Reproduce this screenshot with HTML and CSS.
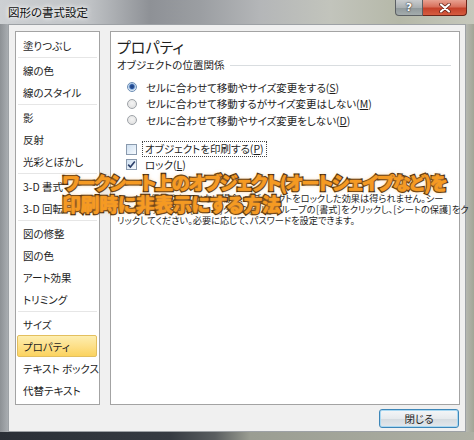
FILE: index.html
```html
<!DOCTYPE html>
<html lang="ja">
<head>
<meta charset="utf-8">
<title>図形の書式設定</title>
<link rel="stylesheet" href="styles.css">
</head>
<body>
<div class="window">
  <div class="titlebar">
    <span class="title">図形の書式設定</span>
    <div class="caption-buttons">
      <span class="btn-help">?</span>
      <span class="btn-close"><svg width="14" height="10" viewBox="0 0 14 10"><path d="M3 1.5 L11 8.5 M11 1.5 L3 8.5" stroke="#5a1a10" stroke-width="3.6" stroke-linecap="round"/><path d="M3 1.5 L11 8.5 M11 1.5 L3 8.5" stroke="#ffffff" stroke-width="2.2" stroke-linecap="round"/></svg></span>
    </div>
  </div>
  <div class="client">
    <div class="main">
      <ul class="nav">
        <li class="item">塗りつぶし</li>
        <li class="sep"></li>
        <li class="item">線の色</li>
        <li class="item">線のスタイル</li>
        <li class="sep"></li>
        <li class="item">影</li>
        <li class="item">反射</li>
        <li class="item">光彩とぼかし</li>
        <li class="sep"></li>
        <li class="item">3-D 書式</li>
        <li class="item">3-D 回転</li>
        <li class="sep"></li>
        <li class="item">図の修整</li>
        <li class="item">図の色</li>
        <li class="item">アート効果</li>
        <li class="item">トリミング</li>
        <li class="sep"></li>
        <li class="item">サイズ</li>
        <li class="item active">プロパティ</li>
        <li class="item">テキスト ボックス</li>
        <li class="item">代替テキスト</li>
      </ul>
      <div class="panel">
        <div class="heading">プロパティ</div>
        <div class="group-title"><span>オブジェクトの位置関係</span></div>
        <div class="radios">
          <div class="opt"><span class="radio on"></span><span>セルに合わせて移動やサイズ変更をする(<u>S</u>)</span></div>
          <div class="opt"><span class="radio"></span><span>セルに合わせて移動するがサイズ変更はしない(<u>M</u>)</span></div>
          <div class="opt"><span class="radio"></span><span>セルに合わせて移動やサイズ変更をしない(<u>D</u>)</span></div>
        </div>
        <div class="checks">
          <div class="chk"><span class="box"></span><span class="focus">オブジェクトを印刷する(<u>P</u>)</span></div>
          <div class="chk"><span class="box"><svg width="9" height="9" viewBox="0 0 9 9"><path d="M1.2 4.6 L3.4 7 L7.8 1.6" fill="none" stroke="#2b3f6a" stroke-width="1.6"/></svg></span><span class="label">ロック(<u>L</u>)</span></div>
        </div>
        <div class="desc">
          <div>シートが保護されていない場合、オブジェクトをロックした効果は得られません。シー</div>
          <div>トを保護するには、[ホーム] タブの [セル] グループの [書式] をクリックし、[シートの保護] をク</div>
          <div>リックしてください。必要に応じて、パスワードを設定できます。</div>
        </div>
      </div>
    </div>
    <div class="footer">
      <button class="close-btn">閉じる</button>
    </div>
  </div>
  <div class="overlay">
    <div class="ov1">ワークシート上のオブジェクト(オートシェイプなど)を</div>
    <div class="ov2">印刷時に非表示にする方法</div>
  </div>
</div>
</body>
</html>
```

FILE: styles.css
```css
html, body {
  margin: 0;
  padding: 0;
}
body {
  width: 474px;
  height: 440px;
  overflow: hidden;
  font-family: "Noto Sans CJK JP", "Noto Sans", sans-serif;
  font-feature-settings: "palt";
  color: #1e1e1e;
}
.window {
  position: relative;
  width: 474px;
  height: 440px;
  display: flex;
  flex-direction: column;
  background:
    linear-gradient(to right, #2a2f36 0px, #363b42 170px, #5a5e60 215px, #9a9d92 250px, #aeb0a4 474px) left bottom / 100% 8px no-repeat,
    linear-gradient(to right, #8d9195 0px, #a9adb1 8px, #b6b8b0 466px, #a2a596 474px),
    #a9adb1;
}
.titlebar {
  height: 24px;
  flex: none;
  display: flex;
  align-items: flex-start;
  justify-content: space-between;
  background: linear-gradient(to right, #cdd0d3 0px, #bfc2c5 90px, #8e9196 150px, #9b9ea2 200px, #b4b6b8 260px, #c2c4bc 330px, #b5b8a8 400px, #c6c8bc 474px);
}
.title {
  margin: 4px 0 0 8px;
  font-size: 11.5px;
  line-height: 16px;
  color: #111;
  text-shadow: 0 0 4px #fff, 0 0 6px rgba(255,255,255,0.9);
}
.caption-buttons {
  display: flex;
  margin-right: 7px;
  height: 16px;
}
.btn-help {
  width: 26px;
  height: 15px;
  border: 1px solid #5b5f63;
  border-top: none;
  border-radius: 0 0 0 4px;
  background: linear-gradient(to bottom, #c9ccce 0%, #aab0b2 50%, #8f989a 51%, #a4acad 100%);
  color: #fff;
  font: bold 11px/15px "DejaVu Sans", sans-serif;
  text-align: center;
  text-shadow: 0 0 2px #333, 0 0 1px #222;
}
.btn-close {
  width: 43px;
  height: 15px;
  border: 1px solid #6b2418;
  border-left: none;
  border-top: none;
  border-radius: 0 0 4px 0;
  background: linear-gradient(to bottom, #e8a191 0%, #d8705c 45%, #c5412a 55%, #d65c3f 100%);
  display: flex;
  align-items: center;
  justify-content: center;
}
.client {
  flex: 1;
  margin: 0 8px 8px 8px;
  border: 1px solid #9da1a5;
  background: #f0f0f0;
  padding: 6px 5px 3px 6px;
  display: flex;
  flex-direction: column;
}
.main {
  display: flex;
  gap: 10px;
  height: 374px;
}
.nav {
  list-style: none;
  margin: 0;
  padding: 2px 0 0 0;
  width: 83px;
  border: 1px solid #a3a3a3;
  background: #fff;
  font-size: 10.5px;
}
.item {
  height: 22px;
  line-height: 22px;
  margin: 0 2px 0 1px;
  padding-left: 5px;
  white-space: nowrap;
  border: 1px solid transparent;
  box-sizing: border-box;
}
.item.active {
  background: linear-gradient(to bottom, #fdeeb0 0%, #fde08a 50%, #fbd35f 100%);
  border-color: #e3bf5e;
  border-radius: 2px;
}
.sep {
  height: 1px;
  margin: 1px 2px 1px 2px;
  background: #e6e6e6;
}
.panel {
  flex: 1;
  min-width: 0;
  border: 1px solid #a3a3a3;
  background: #fff;
  padding: 6px 6px 0 6px;
  font-size: 10.5px;
}
.heading {
  font-size: 15px;
  line-height: 18px;
  color: #1e1e1e;
}
.group-title {
  margin-top: 2px;
  line-height: 14px;
  display: flex;
  align-items: center;
}
.group-title::after {
  content: "";
  flex: 1;
  height: 1px;
  background: #d9dde0;
  margin: 1px 2px 0 6px;
}
.radios {
  margin-top: 7px;
}
.opt {
  height: 16.5px;
  display: flex;
  align-items: center;
  padding-left: 10px;
  gap: 9px;
  white-space: nowrap;
}
.radio {
  width: 8px;
  height: 8px;
  flex: none;
  border-radius: 50%;
  border: 1px solid #9ea3a8;
  background: radial-gradient(circle at 50% 40%, #f4f4f4 0%, #dcdcdc 100%);
}
.radio.on {
  border-color: #6c8db4;
  background: radial-gradient(circle at 50% 45%, #1f3f7a 0px, #2a56a0 2px, #9fbfe3 3px, #e2edf8 4px);
}
.checks {
  margin-top: 13px;
}
.chk {
  height: 15px;
  display: flex;
  align-items: center;
  padding-left: 9px;
  gap: 6px;
  white-space: nowrap;
}
.box {
  width: 9px;
  height: 9px;
  flex: none;
  border: 1px solid #8a9aae;
  background: linear-gradient(135deg, #cfe0f1 0%, #eaf2fa 70%, #f8fbfe 100%);
  display: flex;
  align-items: center;
  justify-content: center;
}
.focus {
  outline: 1px dotted #444;
  padding: 0 2px;
  line-height: 14px;
}
.label {
  padding: 0 2px;
}
.desc {
  margin-top: 21px;
  font-size: 9.2px;
  line-height: 11px;
  word-spacing: -1.5px;
  white-space: nowrap;
}
.footer {
  display: flex;
  justify-content: flex-end;
  margin-top: 4px;
}
.close-btn {
  width: 80px;
  height: 19px;
  margin: 0 1px 0 0;
  padding: 0;
  border: 1px solid #3d86b8;
  border-radius: 3px;
  background: linear-gradient(to bottom, #f4f6f8 0%, #e6eaed 50%, #d4dadf 51%, #e3e8ec 100%);
  box-shadow: inset 0 0 0 1px #a8d8f2;
  font-family: "Noto Sans CJK JP", sans-serif;
  font-feature-settings: "palt";
  font-size: 10.5px;
  color: #1e1e1e;
}
.overlay {
  position: absolute;
  left: 62px;
  top: 172px;
  font-size: 19px;
  font-weight: 900;
  line-height: 21px;
  white-space: nowrap;
  color: #f59a22;
  -webkit-text-stroke: 2.6px #2a1806;
  paint-order: stroke fill;
  text-shadow: 0 0 2px #f7a03a, 0 0 4px rgba(247,160,58,0.7);
}
.ov1 {
  font-size: 18.5px;
  letter-spacing: -1.6px;
}
.ov2 {
  letter-spacing: -0.4px;
}
```
